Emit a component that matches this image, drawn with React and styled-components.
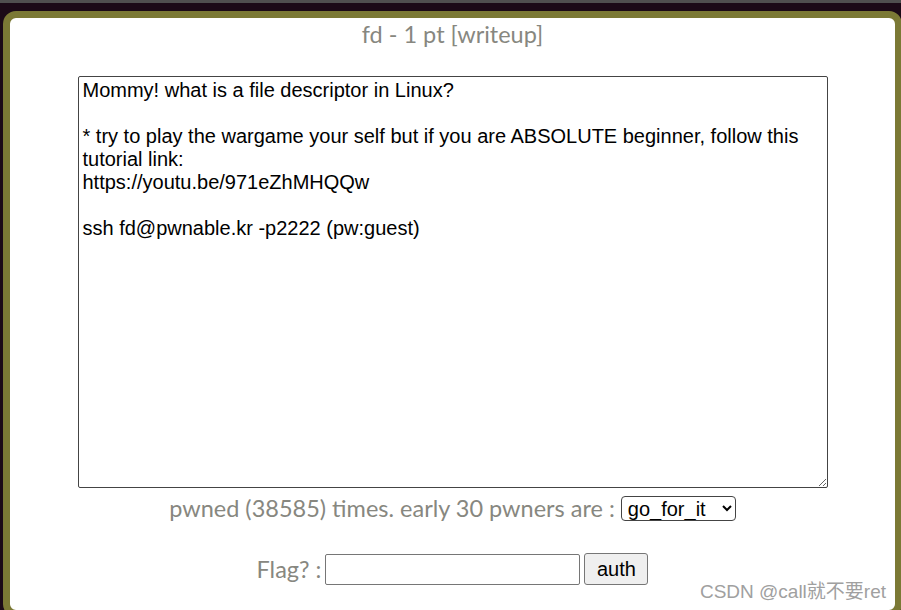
import styled, { createGlobalStyle } from 'styled-components'

const GlobalStyle = createGlobalStyle`
  html, body {
    margin: 0;
    padding: 0;
    background: #1b0a17;
    overflow: hidden;
  }
`

const Screen = styled.div`
  position: relative;
  width: 901px;
  height: 610px;
  box-sizing: border-box;
  border-top: 3px solid #4f4f4f;
  padding: 8px 0 0 3px;
  background: #1b0a17;
  overflow: hidden;
`

const Panel = styled.div`
  width: 899px;
  height: 606px;
  box-sizing: border-box;
  border: 7px solid #7b7935;
  border-radius: 13px;
  background: #fff;
  display: flex;
  flex-direction: column;
  align-items: center;
  padding-top: 2px;
  font-family: Lato, 'Liberation Sans', sans-serif;
  color: #878780;
`

const Title = styled.div`
  font-size: 23.5px;
  line-height: 28px;
`

const Description = styled.textarea`
  margin-top: 28px;
  width: 750px;
  height: 412px;
  box-sizing: border-box;
  border: 1px solid #444;
  border-radius: 2px;
  padding: 2px 3px 2px 4px;
  font-family: 'Liberation Sans', Arial, sans-serif;
  font-size: 20px;
  line-height: 23px;
  color: #000;
  resize: both;
  outline: none;
`

const Row = styled.div`
  display: flex;
  align-items: center;
  gap: 4px;
  margin-top: ${(p) => p.$top}px;
  font-size: 23.5px;
  line-height: 28px;
`

const Select = styled.select`
  height: 25px;
  width: 115px;
  margin-left: 2px;
  box-sizing: border-box;
  border: 1px solid #444;
  border-radius: 4px;
  font-family: 'Liberation Sans', Arial, sans-serif;
  font-size: 20px;
  color: #000;
  background: #fff;
  padding: 0 2px;
`

const FlagInput = styled.input`
  width: 255px;
  height: 31px;
  box-sizing: border-box;
  border: 1px solid #767676;
  border-radius: 2px;
  font-size: 18px;
`

const AuthButton = styled.button`
  width: 64px;
  height: 32px;
  box-sizing: border-box;
  border: 1px solid #767676;
  border-radius: 3px;
  background: #efefef;
  font-family: 'Liberation Sans', Arial, sans-serif;
  font-size: 20px;
  color: #000;
  padding: 0;
`

const Watermark = styled.div`
  position: absolute;
  right: 15px;
  bottom: 7px;
  font-family: 'Liberation Sans', 'Noto Sans CJK SC', sans-serif;
  font-size: 19px;
  color: #a0a0a0;
  pointer-events: none;
`

const text = `Mommy! what is a file descriptor in Linux?

* try to play the wargame your self but if you are ABSOLUTE beginner, follow this tutorial link:
https://youtu.be/971eZhMHQQw

ssh fd@pwnable.kr -p2222 (pw:guest)
`

export default function App() {
  return (
    <>
      <GlobalStyle />
      <Screen>
        <Panel>
          <Title>fd - 1 pt [writeup]</Title>
          <Description defaultValue={text} readOnly spellCheck={false} />
          <Row $top={6}>
            <span>pwned (38585) times. early 30 pwners are :</span>
            <Select defaultValue="go_for_it">
              <option>go_for_it</option>
            </Select>
          </Row>
          <Row $top={31}>
            <span>Flag? :</span>
            <FlagInput type="text" />
            <AuthButton>auth</AuthButton>
          </Row>
        </Panel>
        <Watermark>CSDN @call就不要ret</Watermark>
      </Screen>
    </>
  )
}
